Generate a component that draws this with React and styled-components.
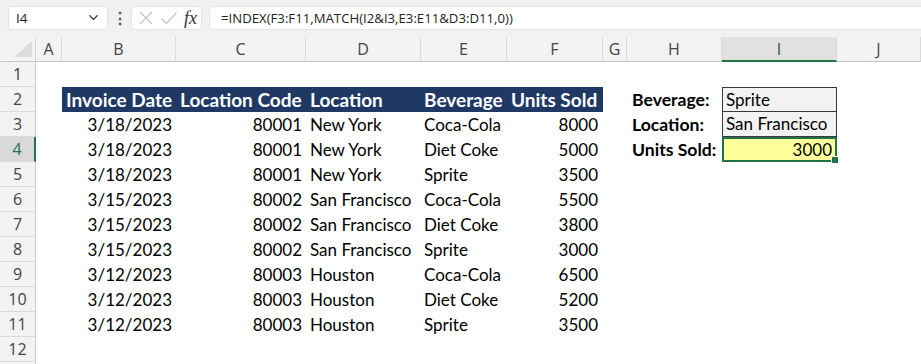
import React from 'react'
import styled, { createGlobalStyle } from 'styled-components'
import { ChevronDown } from 'lucide-react'

const GlobalStyle = createGlobalStyle`
  html, body {
    margin: 0;
    padding: 0;
    background: #fff;
    overflow: hidden;
  }
`;

const COLS = '36px 26px 114px 130px 115px 86px 96px 24px 95px 115px 84px';
const GREEN = '#217346';

const Page = styled.div`
  width: 921px;
  height: 364px;
  overflow: hidden;
  font-family: Lato, "Open Sans", sans-serif;
`;

const FormulaBar = styled.div`
  height: 37px;
  background: #f1f1f1;
  display: flex;
  align-items: center;
  padding-left: 8px;
  box-sizing: border-box;
  padding-bottom: 2px;
  font-family: "Open Sans", sans-serif;
`;

const NameBox = styled.div`
  width: 100px;
  height: 24px;
  box-sizing: border-box;
  background: #fff;
  border: 1px solid #e4e4e4;
  border-radius: 4px;
  display: flex;
  align-items: center;
  justify-content: space-between;
  padding: 0 6px 0 7px;
  font-size: 13.5px;
  color: #222;
`;

const Kebab = styled.div`
  width: 23px;
  text-align: center;
  font-size: 16px;
  font-weight: 700;
  color: #555;
`;

const FxBox = styled.div`
  width: 71px;
  height: 24px;
  box-sizing: border-box;
  background: #fff;
  border: 1px solid #e4e4e4;
  border-radius: 4px;
  display: flex;
  align-items: center;
  padding: 0 4px 0 6px;
  gap: 6px;
`;

const Fx = styled.span`
  font-family: "Liberation Serif", serif;
  font-style: italic;
  font-size: 18px;
  color: #333;
  margin-left: auto;
  line-height: 1;
`;

const FormulaInput = styled.div`
  flex: 1;
  height: 24px;
  margin-left: 7px;
  margin-right: -10px;
  box-sizing: border-box;
  background: #fff;
  border: 1px solid #e4e4e4;
  border-radius: 4px;
  display: flex;
  align-items: center;
  padding-left: 11px;
  font-size: 13.2px;
  color: #222;
  white-space: nowrap;
`;

const Row = styled.div`
  display: grid;
  grid-template-columns: ${COLS};
  height: ${p => p.$h || 25}px;
`;

const Corner = styled.div`
  background: #f3f3f3;
  border-right: 1px solid #d6d6d6;
  border-bottom: 1px solid #c8c8c8;
  display: flex;
  align-items: flex-end;
  justify-content: flex-end;
  padding: 0 3px 4px 0;
  &::after {
    content: '';
    width: 0;
    height: 0;
    border-left: 18px solid transparent;
    border-bottom: 16px solid #dcdcdc;
  }
`;

const ColHead = styled.div`
  background: ${p => (p.$active ? '#e1e1e1' : '#f3f3f3')};
  border-right: 1px solid #dadada;
  border-bottom: ${p => (p.$active ? `2px solid ${GREEN}` : '1px solid #c8c8c8')};
  display: flex;
  align-items: center;
  justify-content: center;
  font-family: "Open Sans", sans-serif;
  font-size: 16px;
  color: ${p => (p.$active ? '#2b5a3e' : '#444')};
  box-sizing: border-box;
`;

const RowHead = styled.div`
  background: ${p => (p.$active ? '#d9d9d9' : '#f3f3f3')};
  border-right: ${p => (p.$active ? `2px solid ${GREEN}` : '1px solid #c8c8c8')};
  border-bottom: 1px solid #dadada;
  display: flex;
  align-items: center;
  justify-content: center;
  font-family: "Open Sans", sans-serif;
  font-size: 16px;
  color: ${p => (p.$active ? GREEN : '#444')};
  box-sizing: border-box;
`;

const Cell = styled.div`
  position: relative;
  padding: 0 4px;
  box-sizing: border-box;
  line-height: 25px;
  font-size: 17px;
  white-space: nowrap;
  overflow: visible;
  text-align: ${p => p.$align || 'left'};
  font-weight: ${p => (p.$bold ? 700 : 400)};
  color: ${p => p.$color || '#000'};
  background: ${p => p.$bg || 'transparent'};
`;

const HeadCell = styled(Cell)`
  background: #203864;
  color: #fff;
  font-weight: 700;
  font-size: 19px;
  overflow: hidden;
`;

const Label = styled(Cell)`
  font-weight: 700;
  font-size: 17.6px;
  padding-left: 5px;
`;

const LookupCell = styled(Cell)`
  background: #f2f2f2;
  border: 1px solid #3a3a3a;
  border-top: ${p => (p.$first ? '1px solid #3a3a3a' : 'none')};
  line-height: ${p => (p.$first ? 23 : 24)}px;
  padding-left: 3px;
`;

const ResultCell = styled(Cell)`
  background: #ffff9c;
  border: 2px solid ${GREEN};
  line-height: 21px;
  padding-right: 3px;
  &::after {
    content: '';
    position: absolute;
    right: -4px;
    bottom: -4px;
    width: 6px;
    height: 6px;
    background: ${GREEN};
    border: 1px solid #fff;
  }
`;

const Empty = styled.div``;

const letters = ['A', 'B', 'C', 'D', 'E', 'F', 'G', 'H', 'I', 'J'];

const data = [
  ['3/18/2023', '80001', 'New York', 'Coca-Cola', '8000'],
  ['3/18/2023', '80001', 'New York', 'Diet Coke', '5000'],
  ['3/18/2023', '80001', 'New York', 'Sprite', '3500'],
  ['3/15/2023', '80002', 'San Francisco', 'Coca-Cola', '5500'],
  ['3/15/2023', '80002', 'San Francisco', 'Diet Coke', '3800'],
  ['3/15/2023', '80002', 'San Francisco', 'Sprite', '3000'],
  ['3/12/2023', '80003', 'Houston', 'Coca-Cola', '6500'],
  ['3/12/2023', '80003', 'Houston', 'Diet Coke', '5200'],
  ['3/12/2023', '80003', 'Houston', 'Sprite', '3500'],
];

const lookup = {
  2: ['Beverage:', 'Sprite'],
  3: ['Location:', 'San Francisco'],
  4: ['Units Sold:', '3000'],
};

const XIcon = () => (
  <svg width="16" height="16" viewBox="0 0 16 16" fill="none" stroke="#c4c4c4" strokeWidth="1.2">
    <path d="M2 2 L14 14 M14 2 L2 14" />
  </svg>
);

const CheckIcon = () => (
  <svg width="18" height="16" viewBox="0 0 18 16" fill="none" stroke="#c4c4c4" strokeWidth="1.2">
    <path d="M1.5 8.5 L6.5 13.5 L16.5 2.5" />
  </svg>
);

function LookupArea({ r }) {
  const entry = lookup[r];
  if (!entry) return (<><Empty /><Empty /></>);
  const [label, value] = entry;
  return (
    <>
      <Label>{label}</Label>
      {r === 4
        ? <ResultCell $align="right">{value}</ResultCell>
        : <LookupCell $first={r === 2}>{value}</LookupCell>}
    </>
  );
}

export default function App() {
  const rows = [];
  for (let r = 1; r <= 13; r++) {
    let body;
    if (r === 1 || r > 11) {
      body = letters.map(l => <Empty key={l} />);
    } else if (r === 2) {
      body = (
        <>
          <Empty />
          <HeadCell>Invoice Date</HeadCell>
          <HeadCell>Location Code</HeadCell>
          <HeadCell>Location</HeadCell>
          <HeadCell style={{ paddingLeft: 3 }}>Beverage</HeadCell>
          <HeadCell>Units Sold</HeadCell>
          <Empty />
          <LookupArea r={r} />
          <Empty />
        </>
      );
    } else {
      const [date, code, loc, bev, units] = data[r - 3];
      body = (
        <>
          <Empty />
          <Cell $align="right">{date}</Cell>
          <Cell $align="right">{code}</Cell>
          <Cell>{loc}</Cell>
          <Cell style={{ paddingLeft: 3 }}>{bev}</Cell>
          <Cell $align="right" style={{ paddingRight: 5 }}>{units}</Cell>
          <Empty />
          <LookupArea r={r} />
          <Empty />
        </>
      );
    }
    rows.push(
      <Row key={r}>
        <RowHead $active={r === 4}>{r <= 12 ? r : ''}</RowHead>
        {body}
      </Row>
    );
  }

  return (
    <Page>
      <GlobalStyle />
      <FormulaBar>
        <NameBox>
          <span>I4</span>
          <ChevronDown size={15} strokeWidth={2.2} color="#333" />
        </NameBox>
        <Kebab>⋮</Kebab>
        <FxBox>
          <XIcon />
          <CheckIcon />
          <Fx>fx</Fx>
        </FxBox>
        <FormulaInput>=INDEX(F3:F11,MATCH(I2&amp;I3,E3:E11&amp;D3:D11,0))</FormulaInput>
      </FormulaBar>
      <Row $h={25}>
        <Corner />
        {letters.map(l => (
          <ColHead key={l} $active={l === 'I'}>{l}</ColHead>
        ))}
      </Row>
      {rows}
    </Page>
  );
}
